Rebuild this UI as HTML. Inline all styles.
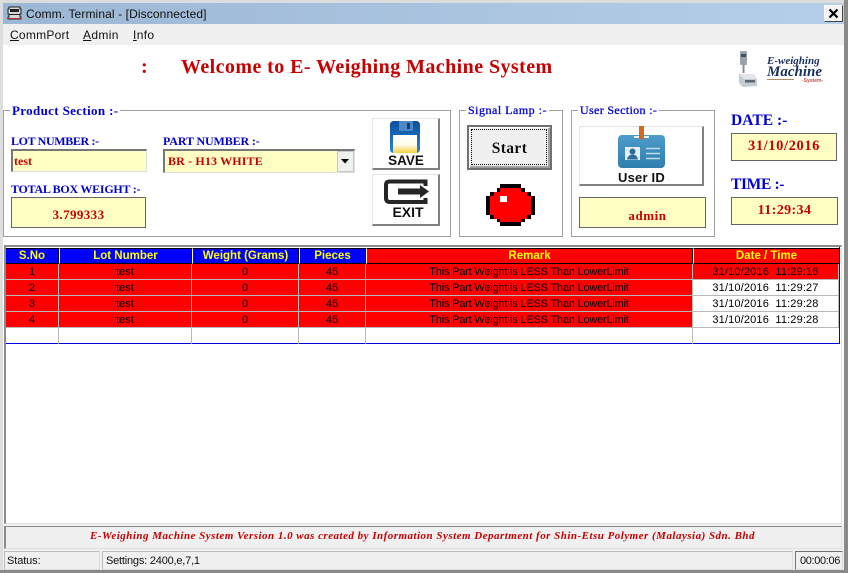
<!DOCTYPE html>
<html><head><meta charset="utf-8"><style>
html,body{margin:0;padding:0;width:848px;height:573px;overflow:hidden;background:#fff}
#w{position:relative;width:848px;height:573px;background:#fff;overflow:hidden;font-family:"Liberation Sans",sans-serif}
#w div,#w svg{position:absolute}
.t{white-space:nowrap;line-height:1}
.s{font-family:"Liberation Serif",serif;font-weight:bold}
.b{color:#0000d0}
.r{color:#c80000}
.fr{border:1px solid #a0a0a0;box-sizing:border-box}
.lg{background:#fff;padding:0 2px}
.y{background:#ffffc4;box-sizing:border-box;border:1px solid #666}
.btn{background:#fff;box-sizing:border-box;border-top:1px solid #e3e3e3;border-left:1px solid #e3e3e3;border-right:2px solid #808080;border-bottom:2px solid #808080}
.c{text-align:center}
.g{font-size:11px;line-height:16px;height:16px;text-align:center;box-sizing:border-box;color:#000;white-space:nowrap}
.h{font-weight:bold;color:#ff0;height:16px;line-height:15px;font-size:11.5px;border-right:1px solid #000;border-left:1px solid #fff;border-bottom:1px solid #000;border-top:1px solid #000}
.cell{border-right:1px solid #b8b8b8;border-bottom:1px solid #b8b8b8}
.rm{letter-spacing:-.2px}
.dt{letter-spacing:.15px}
u{text-decoration:underline}
</style></head><body><div id="w">

<!-- window chrome -->
<div style="left:0;top:0;width:848px;height:3px;background:#dcdcdc"></div>
<div style="left:0;top:0;width:3px;height:573px;background:#dedede"></div>
<div style="left:844px;top:0;width:4px;height:573px;background:#8a8a8a"></div>
<div style="left:0;top:570px;width:848px;height:3px;background:#8a8a8a"></div>
<div style="left:3px;top:3px;width:841px;height:21px;background:linear-gradient(90deg,#9cb7d4,#b5cfea)"></div>
<div style="left:3px;top:24px;width:841px;height:21px;background:#f0f0f0"></div>

<!-- title icon -->
<svg style="left:7px;top:6px" width="15" height="14" viewBox="0 0 15 14">
<path d="M2 1h11v2h1v5h-1v3h1v2H1v-2h1V8H1V3h1z" fill="#d8d8d8" stroke="#222" stroke-width="1"/>
<rect x="3" y="3" width="9" height="3" fill="#222"/>
<rect x="2" y="8" width="11" height="1" fill="#222"/>
<rect x="1" y="12" width="13" height="1" fill="#a33"/>
</svg>
<div class="t" style="left:26px;top:8px;font-size:12px;letter-spacing:.11px;color:#111">Comm. Terminal - [Disconnected]</div>

<!-- close -->
<div style="left:824px;top:5px;width:19px;height:17px;box-sizing:border-box;background:#f4f4f4;border-top:1px solid #fff;border-left:1px solid #fff;border-right:1px solid #444;border-bottom:1px solid #444"></div>
<svg style="left:828px;top:8px" width="11" height="11" viewBox="0 0 11 11"><path d="M1.500 1.500l8 8M9.500 1.500l-8 8" stroke="#000" stroke-width="2.200"/></svg>

<!-- menu -->
<div class="t" style="left:10px;top:29px;font-size:12px;letter-spacing:.25px;color:#111"><u>C</u>ommPort</div>
<div class="t" style="left:83px;top:29px;font-size:12px;letter-spacing:.35px;color:#111"><u>A</u>dmin</div>
<div class="t" style="left:133px;top:29px;font-size:12px;letter-spacing:.35px;color:#111"><u>I</u>nfo</div>

<!-- heading -->
<div class="t s r" style="left:141px;top:57px;font-size:20px">:</div>
<div class="t s r" style="left:181px;top:57px;font-size:20px;letter-spacing:.43px">Welcome to E- Weighing Machine System</div>

<!-- logo -->
<svg style="left:736px;top:49px" width="24" height="40" viewBox="0 0 24 40">
<rect x="4" y="2" width="7" height="14" rx="1" fill="#9aa2ac"/><rect x="5" y="5" width="5" height="3" fill="#45505c"/>
<rect x="6.500" y="16" width="2" height="8" fill="#8a8f96"/>
<path d="M3 25h15l3 5v7l-14 1-4-4z" fill="#c3cbd3"/><path d="M3 25h15l3 5H8z" fill="#e2e6ea"/><rect x="9" y="31" width="10" height="2.500" fill="#5b6670"/>
</svg>
<div class="t" style="left:767px;top:56px;font-family:'Liberation Serif',serif;font-style:italic;font-weight:bold;font-size:11px;color:#1b2f5c">E-weighing</div>
<div class="t" style="left:767px;top:65px;font-family:'Liberation Serif',serif;font-style:italic;font-weight:bold;font-size:15px;color:#16305e">Machine</div>
<div class="t" style="left:802px;top:79px;font-family:'Liberation Sans',sans-serif;font-weight:bold;font-size:5px;color:#c0504d">-System-</div>
<div style="left:767px;top:79px;width:27px;height:1px;background:#b58a60"></div>

<!-- product section -->
<div class="fr" style="left:3px;top:110px;width:448px;height:127px"></div>
<div class="t s b lg" style="left:10px;top:104px;font-size:13px;letter-spacing:.35px">Product Section :-</div>
<div class="t s b" style="left:11px;top:135px;font-size:12px;letter-spacing:-.36px">LOT NUMBER :-</div>
<div class="y" style="left:11px;top:149px;width:136px;height:23px;border:1px solid #ddd;border-top:2px solid #777;border-left:2px solid #777"></div>
<div class="t s r" style="left:14px;top:155px;font-size:12px">test</div>
<div class="t s b" style="left:163px;top:135px;font-size:12px;letter-spacing:-.13px">PART NUMBER :-</div>
<div class="y" style="left:163px;top:149px;width:192px;height:24px;border:1px solid #ddd;border-top:2px solid #777;border-left:2px solid #777"></div>
<div class="t s r" style="left:168px;top:155px;font-size:12px;letter-spacing:.15px">BR - H13 WHITE</div>
<div style="left:337px;top:151px;width:17px;height:21px;box-sizing:border-box;background:#f0f0f0;border:1px solid #c8c8c8"></div>
<svg style="left:341px;top:159px" width="9" height="5" viewBox="0 0 9 5"><path d="M0 0h8L4 4.500z" fill="#000"/></svg>
<div class="t s b" style="left:11px;top:183px;font-size:12px;letter-spacing:-.26px">TOTAL BOX WEIGHT :-</div>
<div class="y" style="left:11px;top:197px;width:135px;height:31px"></div>
<div class="t s r c" style="left:11px;top:208px;width:135px;font-size:13px;letter-spacing:.4px">3.799333</div>

<!-- save -->
<div class="btn" style="left:372px;top:118px;width:68px;height:52px"></div>
<svg style="left:390px;top:121px" width="30" height="32" viewBox="0 0 30 32">
<defs><linearGradient id="sg" x1="0" y1="0" x2="0" y2="1"><stop offset="0" stop-color="#fff"/><stop offset=".55" stop-color="#fffbe8"/><stop offset="1" stop-color="#f6cf3c"/></linearGradient>
<linearGradient id="bg" x1="0" y1="0" x2="0" y2="1"><stop offset="0" stop-color="#0a4f9c"/><stop offset="1" stop-color="#2a86d8"/></linearGradient></defs>
<rect x="0" y="0" width="30" height="32" rx="3.500" fill="url(#bg)"/>
<rect x="9" y="0" width="14" height="10" fill="#4f86c4"/><rect x="17" y="2" width="3" height="6" fill="#0d3f7e"/>
<rect x="3" y="14" width="24" height="18" fill="url(#sg)"/>
</svg>
<div class="t c" style="left:372px;top:154px;width:68px;font-size:13.500px;font-weight:bold;color:#111">SAVE</div>

<!-- exit -->
<div class="btn" style="left:372px;top:174px;width:68px;height:52px"></div>
<svg style="left:384px;top:178px" width="46" height="27" viewBox="0 0 46 27">
<path d="M41.500 8V3.500H6Q2 3.500 2 7v13q0 4 4 4h35.500v-4" fill="none" stroke="#262626" stroke-width="4"/>
<path d="M14 10.500h22V7l9 6.500L36 20v-3.500H14z" fill="#262626"/>
</svg>
<div class="t c" style="left:374px;top:205px;width:68px;font-size:14px;font-weight:bold;color:#111">EXIT</div>

<!-- signal lamp -->
<div class="fr" style="left:459px;top:110px;width:104px;height:127px"></div>
<div class="t s b lg" style="left:466px;top:104px;font-size:12px;font-weight:normal;-webkit-text-stroke:.3px #0000d0;letter-spacing:.5px">Signal Lamp :-</div>
<div style="left:467px;top:125px;width:85px;height:45px;box-sizing:border-box;background:#f0f0f0;border:2px solid #707070;box-shadow:inset 1px 1px 0 #fff,inset -2px -2px 0 #a0a0a0"></div>
<div style="left:471px;top:129px;width:76px;height:36px;box-sizing:border-box;border:1px dotted #000"></div>
<div class="t s c" style="left:467px;top:141px;width:85px;font-size:15.500px;letter-spacing:.4px;color:#111">Start</div>
<svg style="left:486px;top:184px" width="49" height="42" viewBox="0 0 49 42" shape-rendering="crispEdges">
<g fill="#000"><rect x="14" y="0" width="21" height="4"/><rect x="11" y="4" width="28" height="4"/><rect x="4" y="8" width="41" height="4"/><rect x="0" y="12" width="49" height="19"/><rect x="4" y="31" width="41" height="4"/><rect x="11" y="35" width="28" height="3"/><rect x="14" y="38" width="21" height="4"/></g>
<g fill="#f00"><rect x="14" y="4" width="21" height="4"/><rect x="8" y="8" width="33" height="4"/><rect x="4" y="12" width="41" height="19"/><rect x="8" y="31" width="33" height="4"/><rect x="14" y="35" width="21" height="3"/></g>
<rect x="14" y="12" width="7" height="6" fill="#fff"/>
</svg>

<!-- user section -->
<div class="fr" style="left:571px;top:110px;width:144px;height:127px"></div>
<div class="t s b lg" style="left:578px;top:104px;font-size:12px;font-weight:normal;-webkit-text-stroke:.3px #0000d0;letter-spacing:.35px">User Section :-</div>
<div class="btn" style="left:579px;top:126px;width:125px;height:60px"></div>
<svg style="left:617px;top:126px" width="50" height="43" viewBox="0 0 50 43">
<defs><linearGradient id="ug" x1="0" y1="0" x2="0" y2="1"><stop offset="0" stop-color="#4d9ccb"/><stop offset="1" stop-color="#2f7fae"/></linearGradient></defs>
<rect x="1" y="9" width="47" height="33" rx="4" fill="url(#ug)"/>
<rect x="17" y="10" width="15" height="2" fill="#e9f2f7"/>
<path d="M22 0h5v12q0 1.500-2.500 1.500T22 12z" fill="#d2691e"/>
<rect x="8" y="21" width="15" height="13" fill="#e3eef4"/>
<circle cx="15.500" cy="25.500" r="3" fill="#2d6e9a"/><path d="M10 33.500q1-5 5.500-5t5.500 5z" fill="#2d6e9a"/>
<path d="M29 22.500h14M29 27.500h14M29 32.500h14" stroke="#bcdcec" stroke-width="1.500"/>
</svg>
<div class="t c" style="left:579px;top:171px;width:125px;font-size:13px;font-weight:bold;letter-spacing:.2px;color:#111">User ID</div>
<div class="y" style="left:579px;top:197px;width:127px;height:31px"></div>
<div class="t s r c" style="left:579px;top:209px;width:127px;font-size:13px;letter-spacing:.55px;padding-left:10px;box-sizing:border-box">admin</div>

<!-- date/time -->
<div class="t s b" style="left:731px;top:113px;font-size:15.500px;letter-spacing:.05px">DATE :-</div>
<div class="y" style="left:731px;top:133px;width:106px;height:28px"></div>
<div class="t s r c" style="left:731px;top:139px;width:106px;font-size:14.500px;letter-spacing:.6px">31/10/2016</div>
<div class="t s b" style="left:731px;top:177px;font-size:15.500px;letter-spacing:-.35px">TIME :-</div>
<div class="y" style="left:731px;top:197px;width:107px;height:28px"></div>
<div class="t s r c" style="left:731px;top:204px;width:107px;font-size:14px;letter-spacing:.4px">11:29:34</div>

<!-- grid frame -->
<div style="left:4px;top:245px;width:838px;height:279px;box-sizing:border-box;background:#fff;border-top:2px solid #8c8c8c;border-left:2px solid #8c8c8c;border-right:1px solid #e0e0e0;border-bottom:1px solid #e0e0e0"></div>
<div style="left:6px;top:247px;width:834px;height:97px;box-sizing:border-box;border-right:1px solid #0000e0;border-bottom:1px solid #0000e0"></div>

<div class="g h" style="left:6px;top:248px;width:53px;background:#0000ff;border-left:0">S.No</div>
<div class="g h" style="left:59px;top:248px;width:133px;background:#0000ff">Lot Number</div>
<div class="g h" style="left:192px;top:248px;width:107px;background:#0000ff">Weight (Grams)</div>
<div class="g h" style="left:299px;top:248px;width:67px;background:#0000ff">Pieces</div>
<div class="g h" style="left:366px;top:248px;width:327px;background:#f00">Remark</div>
<div class="g h" style="left:693px;top:248px;width:146px;background:#f00;border-right:0">Date / Time</div>

<!-- rows -->
<div class="g cell" style="left:6px;top:264px;width:53px;background:#f00">1</div><div class="g cell" style="left:59px;top:264px;width:133px;background:#f00">test</div><div class="g cell" style="left:192px;top:264px;width:107px;background:#f00">0</div><div class="g cell" style="left:299px;top:264px;width:67px;background:#f00">45</div><div class="g cell rm" style="left:366px;top:264px;width:327px;background:#f00">This Part Weight is LESS Than LowerLimit</div><div class="g cell dt" style="left:693px;top:264px;width:146px;background:#f00">31/10/2016&nbsp; 11:29:16</div>
<div class="g cell" style="left:6px;top:280px;width:53px;background:#f00">2</div><div class="g cell" style="left:59px;top:280px;width:133px;background:#f00">test</div><div class="g cell" style="left:192px;top:280px;width:107px;background:#f00">0</div><div class="g cell" style="left:299px;top:280px;width:67px;background:#f00">45</div><div class="g cell rm" style="left:366px;top:280px;width:327px;background:#f00">This Part Weight is LESS Than LowerLimit</div><div class="g cell dt" style="left:693px;top:280px;width:146px;background:#fff">31/10/2016&nbsp; 11:29:27</div>
<div class="g cell" style="left:6px;top:296px;width:53px;background:#f00">3</div><div class="g cell" style="left:59px;top:296px;width:133px;background:#f00">test</div><div class="g cell" style="left:192px;top:296px;width:107px;background:#f00">0</div><div class="g cell" style="left:299px;top:296px;width:67px;background:#f00">45</div><div class="g cell rm" style="left:366px;top:296px;width:327px;background:#f00">This Part Weight is LESS Than LowerLimit</div><div class="g cell dt" style="left:693px;top:296px;width:146px;background:#fff">31/10/2016&nbsp; 11:29:28</div>
<div class="g cell" style="left:6px;top:312px;width:53px;background:#f00">4</div><div class="g cell" style="left:59px;top:312px;width:133px;background:#f00">test</div><div class="g cell" style="left:192px;top:312px;width:107px;background:#f00">0</div><div class="g cell" style="left:299px;top:312px;width:67px;background:#f00">45</div><div class="g cell rm" style="left:366px;top:312px;width:327px;background:#f00">This Part Weight is LESS Than LowerLimit</div><div class="g cell dt" style="left:693px;top:312px;width:146px;background:#fff">31/10/2016&nbsp; 11:29:28</div>
<div class="g cell" style="left:6px;top:328px;width:53px;border-bottom:0"></div><div class="g cell" style="left:59px;top:328px;width:133px;border-bottom:0"></div><div class="g cell" style="left:192px;top:328px;width:107px;border-bottom:0"></div><div class="g cell" style="left:299px;top:328px;width:67px;border-bottom:0"></div><div class="g cell" style="left:366px;top:328px;width:327px;border-bottom:0"></div><div class="g" style="left:693px;top:328px;width:146px"></div>

<!-- footer band -->
<div style="left:3px;top:524px;width:841px;height:46px;background:#f0f0f0"></div>
<div style="left:4px;top:526px;width:838px;height:23px;box-sizing:border-box;border-top:1px solid #8c8c8c;border-left:2px solid #8c8c8c;border-bottom:1px solid #e0e0e0;border-right:1px solid #e0e0e0"></div>
<div class="t r" style="left:90px;top:531px;font-family:'Liberation Serif',serif;font-style:italic;font-weight:bold;font-size:11px;letter-spacing:.48px">E-Weighing Machine System Version 1.0 was created by Information System Department for Shin-Etsu Polymer (Malaysia) Sdn. Bhd</div>

<!-- status bar -->
<div style="left:4px;top:551px;width:96px;height:19px;box-sizing:border-box;border:1px solid #dadada;border-top:1px solid #bdbdbd;border-left:1px solid #bdbdbd"></div>
<div style="left:102px;top:551px;width:691px;height:19px;box-sizing:border-box;border:1px solid #dadada;border-top:1px solid #bdbdbd;border-left:1px solid #bdbdbd"></div>
<div style="left:795px;top:551px;width:48px;height:19px;box-sizing:border-box;border:1px solid #dadada;border-top:1px solid #707070;border-left:1px solid #707070"></div>
<div class="t" style="left:7px;top:556px;font-size:11px;letter-spacing:-.1px;color:#111">Status:</div>
<div class="t" style="left:106px;top:556px;font-size:11px;letter-spacing:-.2px;color:#111">Settings: 2400,e,7,1</div>
<div class="t" style="left:800px;top:556px;font-size:11px;letter-spacing:-.35px;color:#111">00:00:06</div>

</div></body></html>
